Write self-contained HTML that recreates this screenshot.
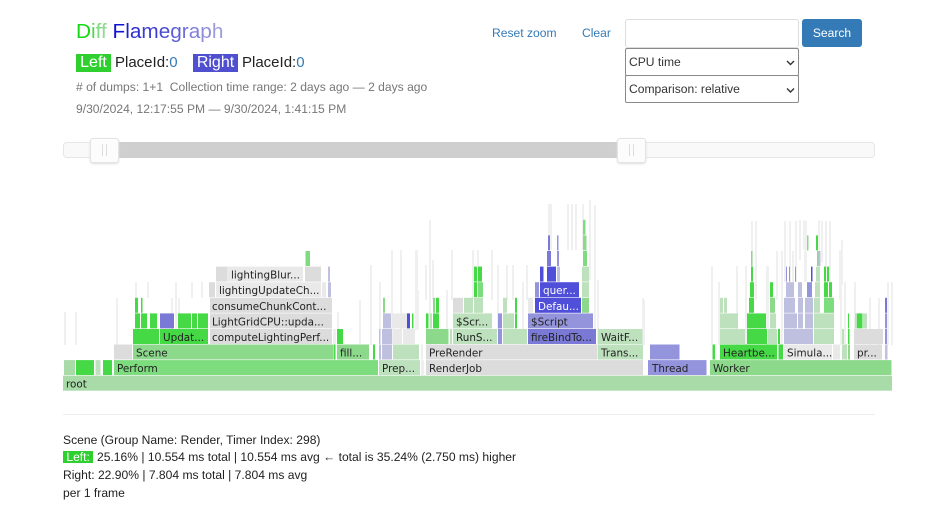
<!DOCTYPE html>
<html><head><meta charset="utf-8"><title>Diff Flamegraph</title>
<style>
html,body{margin:0;padding:0;background:#fff;width:934px;height:516px;overflow:hidden;font-family:"Liberation Sans",sans-serif;color:#333}
.a{position:absolute;white-space:pre;line-height:1}
svg{position:absolute;left:0;top:0}
rect{height:15px}
.s{fill:#46d946}.g{fill:#7ddc7d}.m{fill:#8cd98c}.r{fill:#a8dba8}.p{fill:#bde0bd}.k{fill:#dcdcdc}.l{fill:#e9e9e9}.f{fill:#efefef}
.b{fill:#4f4fd9}.c{fill:#7a7ad6}.d{fill:#9494dc}.e{fill:#bfbfe0}
text{font-family:"DejaVu Sans",sans-serif;font-size:10.4px;fill:#222}
.w{fill:#fff}
.sel{position:absolute;left:625px;width:172px;height:26px;border:1px solid #8a8a8a;border-radius:2px;background:#fff;font-size:12.1px;line-height:26px;color:#333;text-indent:3px}
.h{position:absolute;top:138px;width:27px;height:23px;background:#fcfcfc;border:1px solid #e4e4e4;border-radius:3px;box-shadow:0 1px 2px #ddd}
.h:before{content:"";position:absolute;left:11px;top:5px;width:3px;height:12px;border-left:1px solid #ddd;border-right:1px solid #ddd}
</style></head><body>

<div class="a" style="left:76px;top:22px;font-size:20.75px"><span style="color:#14d814">D</span><span style="color:#4ed84e">i</span><span style="color:#7ddc7d">f</span><span style="color:#95d895">f</span> <span style="color:#1212d0">F</span><span style="color:#1e1ed0">l</span><span style="color:#2c2cd0">a</span><span style="color:#3c3cd2">m</span><span style="color:#4c4cd2">e</span><span style="color:#6060d4">g</span><span style="color:#7070d6">r</span><span style="color:#8080d8">a</span><span style="color:#8e8edb">p</span><span style="color:#9c9cde">h</span></div>

<div class="a" style="left:76px;top:54px;width:35px;height:18px;background:#2fcf2f;color:#fff;font-size:16px;line-height:18px;text-align:center">Left</div>
<div class="a" style="left:115px;top:55px;font-size:15px;color:#222">PlaceId:<span style="color:#337ab7">0</span></div>
<div class="a" style="left:193px;top:54px;width:45px;height:18px;background:#4f4fcf;color:#fff;font-size:16px;line-height:18px;text-align:center">Right</div>
<div class="a" style="left:242px;top:55px;font-size:15px;color:#222">PlaceId:<span style="color:#337ab7">0</span></div>
<div class="a" style="left:76px;top:81px;font-size:12.1px;color:#777"># of dumps: 1+1  Collection time range: 2 days ago — 2 days ago</div>
<div class="a" style="left:76px;top:103px;font-size:12.1px;color:#777">9/30/2024, 12:17:55 PM — 9/30/2024, 1:41:15 PM</div>

<div class="a" style="left:492px;top:27px;font-size:12.1px;color:#337ab7">Reset zoom</div>
<div class="a" style="left:582px;top:27px;font-size:12.1px;color:#337ab7">Clear</div>
<div class="a" style="left:625px;top:19px;width:172px;height:27px;border:1px solid #ddd;border-radius:3px;background:#fff"></div>
<div class="a" style="left:802px;top:19px;width:60px;height:28px;background:#337ab7;border-radius:3px;color:#fff;font-size:12.1px;line-height:28px;text-align:center">Search</div>
<div class="sel" style="top:48px">CPU time</div>
<div class="sel" style="top:75px">Comparison: relative</div>

<div class="a" style="left:63px;top:142px;width:810px;height:14px;background:#f9f9f9;border:1px solid #e6e6e6;border-radius:4px"></div>
<div class="a" style="left:104px;top:142px;width:528px;height:16px;background:#cfcfcf"></div>
<div class="h" style="left:90px"></div>
<div class="h" style="left:617px"></div>

<svg width="934" height="516" viewBox="0 0 934 516">
<path d="M787 50l3.500 3.500 3.500-3.500M787 77.500l3.500 3.500 3.500-3.500" transform="translate(0,11)" fill="none" stroke="#333" stroke-width="1.400"/>
<!-- faint tower lines -->
<path fill="none" stroke="#f0f0f0" stroke-width="2" d="M65 312V345M76 312V345M117 345V298M136 298V282M148 298V282M172 329V298M179 329V298M338 329V312M192 298V282M202 298V282M176 329V282M360 345V300M380 330V282M371 345V265M392 345V250M401 330V250M416 330V250M418 330V290M417 300V250M430 345V220M433 300V260M426 300V265M447 345V290M452 300V250M473 300V250M478 300V250M492 300V250M498 330V265M507 300V265M513 300V265M523 345V282M527 300V265M549 204V250M551 204V250M568 250V204M572 250V204M576 204V250M583 204V250M590 200V280M595 205V345M598 345V280M643 345V298M644 345V300M712 345V266M719 345V282M737 345V266M746 345V266M752 300V221M756 300V221M767 345V266M768 345V266M777 300V251M782 345V251M785 282V221M790 282V221M796 282V221M806 282V221M819 282V220M822 262V221M826 282V221M830 282V221M841 345V282M845 345V290M855 345V282M870 345V298M879 345V298M888 345V282M800 260V220M793 282V251M804 220V250M805 251V282M840 300V250M842 240V285M845 282V310M892 345V282"/>
<g transform="translate(0,375.700)"><rect x="63" width="829" class="r"/></g>
<g transform="translate(0,360.100)">
<rect x="64" width="11" class="r"/><rect x="76" width="18" class="s"/><rect x="95.500" width="5" class="p"/><rect x="103" width="9" class="s"/><rect x="114" width="264" class="g"/><rect x="379" width="41" class="p"/><rect x="421" width="3" class="f"/><rect x="426" width="217" class="k"/><rect x="648" width="58.500" class="d"/><rect x="710" width="181.500" class="m"/>
</g>
<g transform="translate(0,344.500)">
<rect x="114" width="18" class="k"/><rect x="133" width="200" class="m"/><rect x="333.500" width="2" class="s"/><rect x="337" width="32" class="m"/><rect x="373" width="2" class="s"/><rect x="379" width="2" class="e"/><rect x="382" width="10" class="e"/><rect x="393" width="26" class="p"/><rect x="421" width="2" class="f"/><rect x="426" width="171.500" class="k"/><rect x="598" width="45" class="p"/><rect x="650" width="29.500" class="d"/><rect x="712.500" width="2.500" class="s"/><rect x="720" width="57" class="s"/><rect x="778.500" width="4.500" class="s"/><rect x="784" width="48" class="l"/><rect x="833" width="7" class="l"/><rect x="842" width="5" class="p"/><rect x="848" width="2" class="m"/><rect x="854" width="28" class="k"/><rect x="885" width="2.500" class="e"/>
</g>
<g transform="translate(0,329)">
<rect x="133" width="26" class="s"/><rect x="160" width="48" class="s"/><rect x="210" width="122" class="k"/><rect x="333" width="3" class="f"/><rect x="337" width="6" class="s"/><rect x="379" width="1.500" class="e"/><rect x="382" width="10" class="e"/><rect x="393" width="9" class="l"/><rect x="403" width="12" class="l"/><rect x="426" width="22.500" class="m"/><rect x="450" width="2" class="p"/><rect x="453" width="44" class="p"/><rect x="498" width="4" class="d"/><rect x="503" width="24" class="p"/><rect x="528" width="68" class="c"/><rect x="598" width="44.500" class="p"/><rect x="720" width="25" class="p"/><rect x="747" width="20" class="s"/><rect x="768" width="9" class="p"/><rect x="778" width="2" class="s"/><rect x="784" width="29" class="e"/><rect x="814" width="20" class="p"/><rect x="842" width="2" class="p"/><rect x="848" width="1.500" class="s"/><rect x="854" width="29" class="k"/><rect x="885" width="2" class="d"/>
</g>
<g transform="translate(0,313.400)">
<rect x="135" width="5" class="s"/><rect x="141" width="6" class="s"/><rect x="150" width="7" class="s"/><rect x="160" width="14" class="c"/><rect x="178" width="13" class="s"/><rect x="192" width="5" class="s"/><rect x="198" width="10" class="s"/><rect x="210" width="122" class="k"/><rect x="383" width="8" class="e"/><rect x="392" width="15" class="l"/><rect x="407" width="3" class="b"/><rect x="412" width="1.500" class="s"/><rect x="426" width="2.500" class="s"/><rect x="430" width="2" class="p"/><rect x="433" width="6" class="s"/><rect x="453" width="39" class="p"/><rect x="498" width="4" class="d"/><rect x="503" width="11" class="p"/><rect x="515" width="2" class="s"/><rect x="528" width="65" class="d"/><rect x="720" width="18" class="p"/><rect x="747" width="19" class="s"/><rect x="770" width="6" class="p"/><rect x="784" width="13" class="e"/><rect x="798" width="5" class="e"/><rect x="805" width="8" class="e"/><rect x="814" width="20" class="p"/><rect x="848" width="1" class="s"/><rect x="855" width="2" class="p"/><rect x="857" width="5.500" class="s"/><rect x="863" width="4" class="p"/><rect x="885" width="2" class="d"/>
</g>
<g transform="translate(0,297.800)">
<rect x="135" width="3" class="s"/><rect x="141" width="1.500" class="s"/><rect x="210" width="122" class="k"/><rect x="383" width="2" class="m"/><rect x="433" width="2" class="m"/><rect x="436" width="3" class="s"/><rect x="453" width="10" class="k"/><rect x="464" width="9" class="p"/><rect x="474" width="9" class="p"/><rect x="503" width="4" class="p"/><rect x="515" width="2" class="s"/><rect x="528" width="5" class="l"/><rect x="535" width="46" class="b"/><rect x="582" width="7" class="m"/><rect x="720" width="3" class="p"/><rect x="724" width="3" class="p"/><rect x="749" width="5" class="s"/><rect x="770" width="5" class="m"/><rect x="784" width="11" class="e"/><rect x="798" width="5" class="e"/><rect x="805" width="8" class="e"/><rect x="814" width="6" class="p"/><rect x="824" width="10" class="g"/><rect x="885" width="2" class="c"/>
</g>
<g transform="translate(0,282.200)">
<rect x="209" width="6" class="k"/><rect x="216" width="105" class="l"/><rect x="322" width="4" class="l"/><rect x="328" width="3" class="e"/><rect x="474" width="3" class="s"/><rect x="478" width="5" class="g"/><rect x="535" width="4" class="d"/><rect x="540" width="39" class="b"/><rect x="582" width="7" class="p"/><rect x="750" width="4" class="s"/><rect x="770" width="3" class="s"/><rect x="786" width="8" class="e"/><rect x="798" width="4" class="e"/><rect x="807" width="5" class="d"/><rect x="815" width="5" class="p"/><rect x="824" width="4" class="s"/><rect x="829" width="3" class="s"/>
</g>
<g transform="translate(0,266.600)">
<rect x="216" width="11" class="k"/><rect x="227" width="76" class="l"/><rect x="305" width="16" class="k"/><rect x="328" width="2" class="e"/><rect x="474" width="3" class="s"/><rect x="478" width="4" class="s"/><rect x="540" width="3.500" class="b"/><rect x="547" width="9" class="b"/><rect x="557" width="3" class="e"/><rect x="582" width="7" class="p"/><rect x="751" width="2" class="s"/><rect x="786" width="1" class="d"/><rect x="789" width="1" class="d"/><rect x="795" width="1" class="d"/><rect x="811" width="1.500" class="b"/><rect x="816" width="4" class="p"/><rect x="824" width="2" class="s"/><rect x="827" width="2" class="s"/>
</g>
<g transform="translate(0,251)">
<rect x="305.500" width="4.500" class="g"/><rect x="547" width="4" class="c"/><rect x="557" width="2" class="d"/><rect x="583" width="4" class="g"/><rect x="751" width="1.500" class="m"/><rect x="817" width="1.500" class="m"/><rect x="818.500" width="2" class="e"/>
</g>
<g transform="translate(0,235.400)"><rect x="548" width="2" class="c"/><rect x="557" width="1.500" class="d"/><rect x="583" width="3.500" class="m"/><rect x="807" width="1.500" class="m"/><rect x="816" width="2" class="s"/></g>
<g transform="translate(0,219.800)"><rect x="583" width="2.500" class="g"/></g>
<g>
<text x="66" y="387.500">root</text><text x="117" y="372">Perform</text><text x="382" y="372">Prep...</text><text x="429" y="372">RenderJob</text><text x="652" y="372">Thread</text><text x="713" y="372">Worker</text>
<text x="136" y="356.500">Scene</text><text x="340" y="356.500">fill...</text><text x="429" y="356.500">PreRender</text><text x="601" y="356.500">Trans...</text><text x="723" y="356.500">Heartbe...</text><text x="787" y="356.500">Simula...</text><text x="857" y="356.500">pr...</text>
<text x="163" y="341">Updat...</text><text x="212" y="341">computeLightingPerf...</text><text x="456" y="341">RunS...</text><text x="531" y="341">fireBindTo...</text><text x="601" y="341">WaitF...</text>
<text x="212" y="325.500">LightGridCPU::upda...</text><text x="456" y="325.500">$Scr...</text><text x="531" y="325.500">$Script</text>
<text x="212" y="310">consumeChunkCont...</text><text x="538" y="310" class="w">Defau...</text>
<text x="219" y="294">lightingUpdateCh...</text><text x="543" y="294" class="w">quer...</text>
<text x="231" y="278.500">lightingBlur...</text>
</g>
<rect x="63" y="414" width="812" style="height:1px" fill="#eee"/>
</svg>

<div class="a" style="left:63px;top:434px;font-size:12.1px;color:#222">Scene (Group Name: Render, Timer Index: 298)</div>
<div class="a" style="left:63px;top:451px;width:30px;height:12px;background:#2fcf2f;color:#fff;font-size:12.1px;line-height:12px"> Left:</div>
<div class="a" style="left:97px;top:451px;font-size:12.1px;color:#222">25.16% | 10.554 ms total | 10.554 ms avg <b>←</b> total is 35.24% (2.750 ms) higher</div>
<div class="a" style="left:63px;top:469px;font-size:12.1px;color:#222">Right: 22.90% | 7.804 ms total | 7.804 ms avg</div>
<div class="a" style="left:63px;top:487px;font-size:12.1px;color:#222">per 1 frame</div>
</body></html>
